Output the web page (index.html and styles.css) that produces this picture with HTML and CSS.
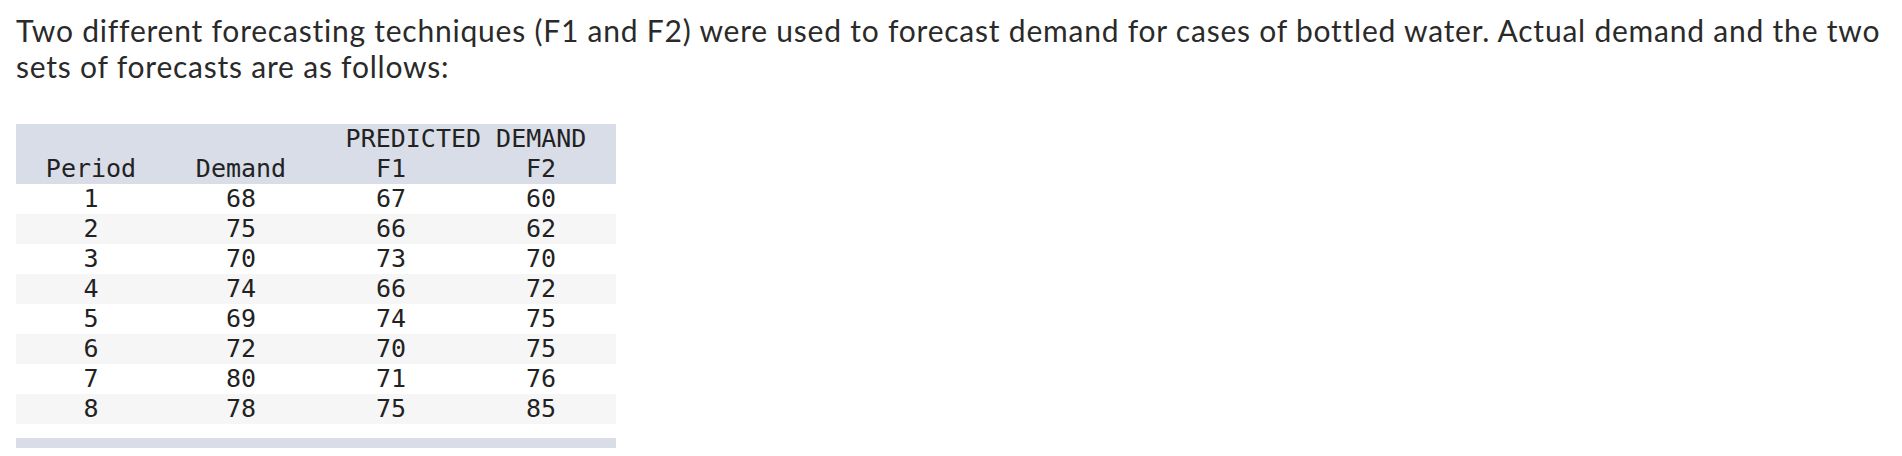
FILE: index.html
```html
<!DOCTYPE html>
<html lang="en">
<head>
<meta charset="utf-8">
<title>Forecasting techniques</title>
<link rel="stylesheet" href="styles.css">
</head>
<body>
<div class="page">
  <p class="intro">Two different forecasting techniques (F1 and F2) were used to forecast demand for cases of bottled water. Actual demand and the two sets of forecasts are as follows:</p>
  <div class="table-block">
    <table class="data">
      <thead>
        <tr><th></th><th></th><th colspan="2">PREDICTED DEMAND</th></tr>
        <tr><th>Period</th><th>Demand</th><th>F1</th><th>F2</th></tr>
      </thead>
      <tbody>
        <tr><td>1</td><td>68</td><td>67</td><td>60</td></tr>
        <tr><td>2</td><td>75</td><td>66</td><td>62</td></tr>
        <tr><td>3</td><td>70</td><td>73</td><td>70</td></tr>
        <tr><td>4</td><td>74</td><td>66</td><td>72</td></tr>
        <tr><td>5</td><td>69</td><td>74</td><td>75</td></tr>
        <tr><td>6</td><td>72</td><td>70</td><td>75</td></tr>
        <tr><td>7</td><td>80</td><td>71</td><td>76</td></tr>
        <tr><td>8</td><td>78</td><td>75</td><td>85</td></tr>
      </tbody>
    </table>
    <div class="table-foot"></div>
  </div>
</div>
</body>
</html>
```
FILE: styles.css
```css
html, body {
  margin: 0;
  padding: 0;
  background: #ffffff;
}

.page {
  padding: 12px 16px 0 16px;
}

.intro {
  margin: 0;
  font-family: Lato, "Liberation Sans", sans-serif;
  font-size: 30px;
  line-height: 36px;
  letter-spacing: 0.78px;
  color: #2a2a2a;
}

.table-block {
  margin-top: 40px;
  width: 600px;
}

.data {
  width: 600px;
  border-collapse: collapse;
  table-layout: fixed;
  font-family: "DejaVu Sans Mono", "Liberation Mono", monospace;
  font-size: 25px;
  color: #222222;
}

.data th,
.data td {
  padding: 0;
  height: 30px;
  line-height: 30px;
  text-align: center;
  font-weight: normal;
  white-space: nowrap;
}

.data thead {
  background: #d9dde7;
}

.data tbody tr:nth-child(even) {
  background: #f6f6f6;
}

.table-foot {
  margin-top: 14px;
  height: 10px;
  background: #d9dde7;
}
```
